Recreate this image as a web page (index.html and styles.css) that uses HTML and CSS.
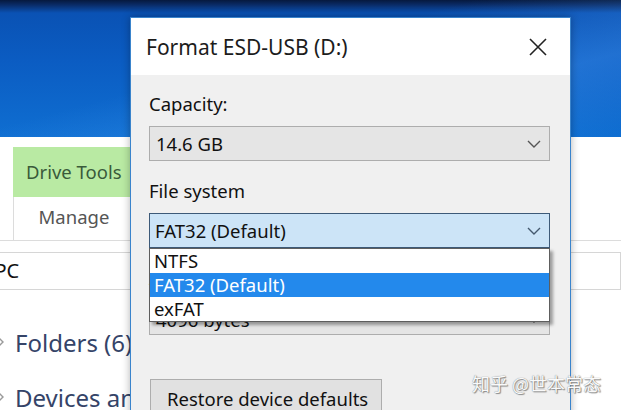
FILE: index.html
```html
<!DOCTYPE html>
<html>
<head>
<meta charset="utf-8">
<link rel="stylesheet" href="styles.css">
</head>
<body>
<div class="desktop">
  <div class="explorer">
    <div class="tabs">
      <div class="tab-green">Drive Tools</div>
    </div>
    <div class="ribbon-row">
      <div class="tab-manage">Manage</div>
    </div>
    <div class="addr-row">
      <div class="addr">This PC</div>
      <div class="refresh">
        <svg width="14" height="20" viewBox="0 0 14 20"><path d="M1 2 A8 8 0 0 1 1 18" fill="none" stroke="#8a8a8a" stroke-width="2"/></svg>
      </div>
      <div class="search">Search</div>
    </div>
    <div class="group">
      <svg class="chev" width="8" height="12" viewBox="0 0 8 12"><path d="M1 1 L6 6 L1 11" fill="none" stroke="#9a9a9a" stroke-width="1.4"/></svg>
      <span>Folders (6)</span>
    </div>
    <div class="group group2">
      <svg class="chev" width="8" height="12" viewBox="0 0 8 12"><path d="M1 1 L6 6 L1 11" fill="none" stroke="#9a9a9a" stroke-width="1.4"/></svg>
      <span>Devices and drives (2)</span>
    </div>
  </div>

  <div class="dialog">
    <div class="titlebar">
      <span class="title">Format ESD-USB (D:)</span>
      <svg class="close" width="18" height="18" viewBox="0 0 18 18"><path d="M1 1 L17 17 M17 1 L1 17" stroke="#222" stroke-width="1.6" fill="none"/></svg>
    </div>
    <div class="body">
      <div class="label">Capacity:</div>
      <div class="combo">
        <span>14.6 GB</span>
        <svg class="arrow" width="14" height="8" viewBox="0 0 14 8"><path d="M1 1 L7 7 L13 1" fill="none" stroke="#555" stroke-width="1.4"/></svg>
      </div>
      <div class="label gap">File system</div>
      <div class="combo-wrap">
        <div class="combo focus">
          <span>FAT32 (Default)</span>
          <svg class="arrow" width="14" height="8" viewBox="0 0 14 8"><path d="M1 1 L7 7 L13 1" fill="none" stroke="#44596e" stroke-width="1.4"/></svg>
        </div>
        <ul class="list">
          <li>NTFS</li>
          <li class="sel">FAT32 (Default)</li>
          <li>exFAT</li>
        </ul>
      </div>
      <div class="label gap">Allocation unit size</div>
      <div class="combo low">
        <span>4096 bytes</span>
        <svg class="arrow" width="14" height="8" viewBox="0 0 14 8"><path d="M1 1 L7 7 L13 1" fill="none" stroke="#555" stroke-width="1.4"/></svg>
      </div>
      <button class="restore">Restore device defaults</button>
    </div>
  </div>

  <div class="watermark">知乎 @世本常态</div>
</div>
</body>
</html>
```
FILE: styles.css
```css
html, body {
  margin: 0;
  padding: 0;
}
body {
  width: 621px;
  height: 410px;
  overflow: hidden;
  font-family: "Noto Sans", "Open Sans", sans-serif;
}
.desktop {
  position: relative;
  width: 621px;
  height: 410px;
  overflow: hidden;
  background:
    linear-gradient(165deg, rgba(0,0,0,0) 22%, rgba(90,170,255,0.28) 38%, rgba(0,0,0,0) 52%, rgba(90,170,255,0.22) 66%, rgba(0,0,0,0) 80%),
    linear-gradient(180deg, #06193e 0, #0a2c68 5px, #0a52b4 13px, #0b5cc2 60px, #0f6fd2 140px);
}

/* explorer window behind */
.explorer {
  position: absolute;
  left: 0;
  top: 137px;
  width: 621px;
  height: 273px;
  background: #fff;
}
.tabs {
  height: 60px;
  padding-top: 10px;
  box-sizing: border-box;
  padding-left: 13px;
}
.tab-green {
  width: 130px;
  height: 50px;
  box-sizing: border-box;
  background: #b9eaa3;
  color: #3a5a3a;
  font-size: 18.5px;
  line-height: 50px;
  padding-left: 13px;
}
.ribbon-row {
  height: 44px;
  padding-left: 13px;
  border-bottom: 1px solid #dcdcdc;
  box-sizing: border-box;
}
.tab-manage {
  width: 120px;
  height: 43px;
  border-left: 1px solid #dcdcdc;
  color: #555;
  font-size: 18.5px;
  line-height: 40px;
  text-align: center;
}
.addr-row {
  display: flex;
  margin-top: 11px;
  height: 38px;
}
.addr {
  width: 556px;
  box-sizing: border-box;
  border-top: 1px solid #d6d6d6;
  border-bottom: 1px solid #d6d6d6;
  font-size: 20px;
  line-height: 35px;
  text-indent: -49px;
  color: #111;
}
.refresh {
  width: 29px;
  box-sizing: border-box;
  border: 1px solid #d6d6d6;
  display: flex;
  align-items: center;
  justify-content: flex-end;
  padding-right: 3px;
}
.search {
  margin-left: 19px;
  width: 200px;
  box-sizing: border-box;
  border: 1px solid #d6d6d6;
  font-size: 18px;
  line-height: 34px;
  padding-left: 10px;
  color: #777;
}
.group {
  display: flex;
  align-items: center;
  gap: 10px;
  margin-top: 35px;
  height: 34px;
  font-size: 24px;
  color: #354468;
}
.group2 {
  margin-top: 21px;
}
.chev {
  margin-left: -3px;
}

/* dialog */
.dialog {
  position: absolute;
  left: 130px;
  top: 17px;
  width: 441px;
  height: 410px;
  box-sizing: border-box;
  border: 1px solid #3a84cc;
  background: #f0f0f0;
  box-shadow: 0 0 8px rgba(0,0,0,0.3);
}
.titlebar {
  height: 57px;
  background: #fff;
  display: flex;
  align-items: center;
  justify-content: space-between;
  padding: 0 23px 0 15px;
}
.title {
  font-size: 21px;
  color: #1c1c1c;
}
.close {
  flex: none;
}
.body {
  padding: 18px 20px 0 18px;
}
.label {
  font-size: 18.5px;
  line-height: 22px;
  height: 22px;
  color: #111;
  margin-bottom: 11px;
  white-space: nowrap;
}
.label.gap {
  margin-top: 19px;
}
.combo {
  height: 35px;
  box-sizing: border-box;
  border: 1px solid #adadad;
  background: #e5e5e5;
  display: flex;
  align-items: center;
  justify-content: space-between;
  padding: 0 8px 0 6px;
  font-size: 18.5px;
  color: #111;
}
.combo.low {
  padding-top: 3px;
}
.combo.focus {
  background: #cce4f7;
  border-color: #3d5a78;
  padding-left: 5px;
}
.combo-wrap {
  position: relative;
}
.list {
  position: absolute;
  left: 0;
  top: 100%;
  width: 401px;
  margin: 0;
  padding: 0;
  list-style: none;
  box-sizing: border-box;
  border: 1px solid #5e5e5e;
  background: #fff;
  box-shadow: 3px 3px 3px rgba(0,0,0,0.35);
  z-index: 2;
}
.list li {
  height: 24px;
  line-height: 24px;
  padding-left: 4px;
  font-size: 18.5px;
  color: #111;
}
.list li.sel {
  background: #2389ec;
  color: #fff;
}
.restore {
  display: block;
  margin: 44px 0 0 1px;
  width: 232px;
  height: 40px;
  box-sizing: border-box;
  border: 1px solid #adadad;
  background: #e1e1e1;
  font-family: inherit;
  font-size: 18.5px;
  color: #111;
  text-align: left;
  padding: 0 0 2px 16px;
}

.watermark {
  position: absolute;
  left: 472px;
  top: 370px;
  font-family: "Noto Sans CJK SC", "Noto Sans", sans-serif;
  font-size: 18px;
  line-height: 26px;
  color: #fafafa;
  text-shadow: 0 0 1px #6a6a6a, 1px 1px 1px #8a8a8a;
  white-space: nowrap;
}
```
